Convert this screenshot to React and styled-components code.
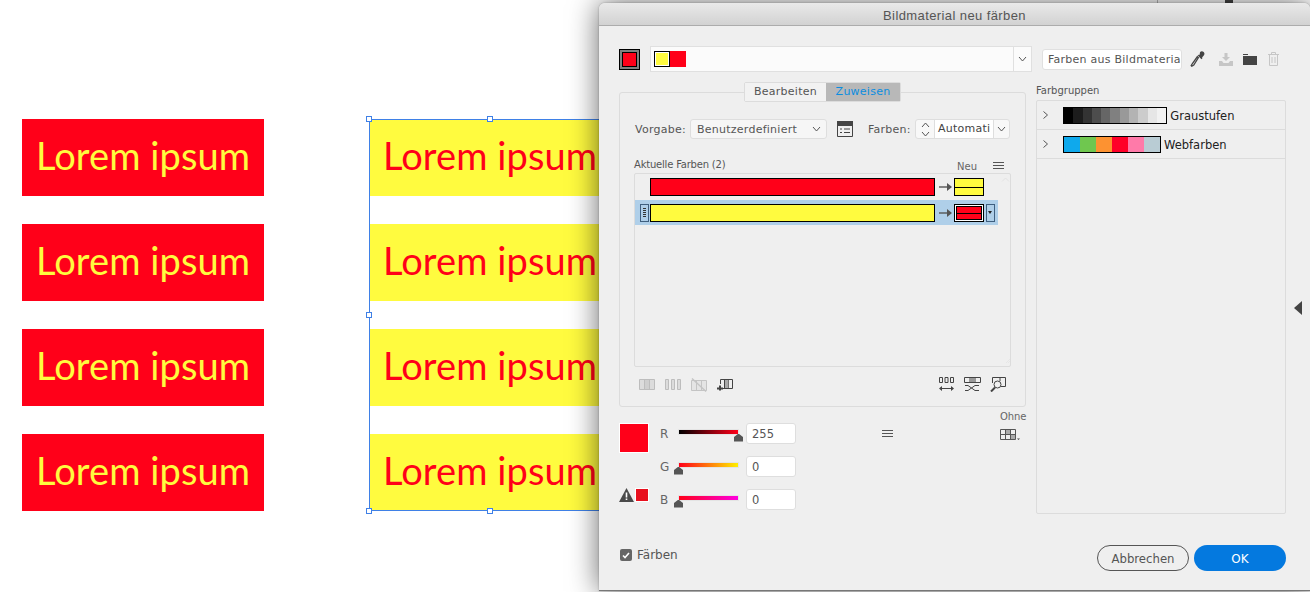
import React from 'react';
import styled, { createGlobalStyle } from 'styled-components';

const RED = '#ff0019';
const YELLOW = '#fffb3f';

const grays = ['#000', '#1c1c1c', '#333', '#4d4d4d', '#666', '#808080', '#999', '#b3b3b3', '#ccc', '#e6e6e6', '#f2f2f2'];
const webColors = ['#0fa9ec', '#6fc74f', '#fd9231', '#ff0028', '#ff7aa9', '#b9ccd4'];

function Chevron({ up }) {
    return (
        <svg width="9" height="6" viewBox="0 0 9 6" fill="none" stroke="#555" strokeWidth="1">
            <path d={up ? 'M1 5l3.5-4L8 5' : 'M1 1l3.5 4L8 1'} />
        </svg>
    );
}

function MenuLines() {
    return (
        <svg width="11" height="8" viewBox="0 0 11 8" stroke="#555" strokeWidth="1">
            <path d="M0 .5h11M0 3.5h11M0 6.5h11" />
        </svg>
    );
}

function ArrowRight() {
    return (
        <svg width="13" height="10" viewBox="0 0 13 10" fill="#555">
            <path d="M0 4.3h8v1.4H0z" />
            <path d="M8 1l5 4-5 4z" />
        </svg>
    );
}

function Blocks({ inverted }) {
    return [0, 1, 2, 3].map((i) => (
        <Block key={i} $inverted={inverted}>Lorem ipsum</Block>
    ));
}

function Slider({ label, gradient, value, at }) {
    return (
        <SliderRow>
            <SliderLabel>{label}</SliderLabel>
            <Track $gradient={gradient}>
                <Thumb style={{ left: at - 5 }} />
            </Track>
            <ValueBox>{value}</ValueBox>
        </SliderRow>
    );
}

function App() {
    return (
        <Page>
            <GlobalStyle />
            <BackWindow />
            <Canvas>
                <Column><Blocks /></Column>
                <SelectedColumn>
                    <Blocks inverted />
                    <Handle $x="0" $y="0" />
                    <Handle $x="50%" $y="0" />
                    <Handle $x="0" $y="50%" />
                    <Handle $x="0" $y="100%" />
                    <Handle $x="50%" $y="100%" />
                </SelectedColumn>
            </Canvas>

            <Dialog>
                <TitleBar>Bildmaterial neu färben</TitleBar>
                <Body>
                    <TopRow>
                        <ActiveSwatch><span /></ActiveSwatch>
                        <GroupSelect>
                            <GroupField>
                                <MiniYellow />
                                <MiniRed />
                            </GroupField>
                            <GroupArrow><Chevron /></GroupArrow>
                        </GroupSelect>
                        <NameField>Farben aus Bildmateria</NameField>
                        <TopIcons>
                            <svg width="16" height="17" viewBox="0 0 16 17" fill="#444">
                                <path d="M10 1.2c1-1.2 2.600-1.200 3.700-.1 1.100 1.100 1 2.700-.1 3.700L12 6.400l.6.6-1.200 1.200-3.600-3.600L9 3.400l.6.6z" />
                                <path d="M7.400 5.600l1 1L3.800 14l-2 1.200-.6-.6L2.400 12.500z" fill="none" stroke="#444" strokeWidth="1.300" />
                            </svg>
                            <svg width="14" height="13" viewBox="0 0 14 13" fill="#c6c6c6">
                                <path d="M5.500 0h3v4H11L7 8 3 4h2.500z" />
                                <path d="M0 8h3l1.500 2h5L11 8h3v5H0z" />
                            </svg>
                            <svg width="14" height="11" viewBox="0 0 14 11" fill="#444">
                                <path d="M0 0h5v1H0z" />
                                <path d="M0 2h14v9H0z" />
                            </svg>
                            <svg width="11" height="14" viewBox="0 0 11 14" fill="none" stroke="#c6c6c6">
                                <path d="M0 2.500h11M3.500 2.500V.5h4v2M1.500 2.500v11h8v-11M4 5v6M7 5v6" />
                            </svg>
                        </TopIcons>
                    </TopRow>

                    <Columns>
                        <LeftColumn>
                            <Panel>
                                <Tabs>
                                    <Tab>Bearbeiten</Tab>
                                    <Tab $active>Zuweisen</Tab>
                                </Tabs>
                                <ControlRow>
                                    <PresetLabel>Vorgabe:</PresetLabel>
                                    <PresetSelect>
                                        Benutzerdefiniert
                                        <Chevron />
                                    </PresetSelect>
                                    <PresetIcon>
                                        <svg width="16" height="16" viewBox="0 0 16 16" fill="none" stroke="#444">
                                            <path d="M0 0h16v5H0z" fill="#444" stroke="none" />
                                            <path d="M.5 4v11.500h15V4" />
                                            <path d="M3 8h2M7 8h6M3 11.500h2M7 11.500h6" />
                                        </svg>
                                    </PresetIcon>
                                    <ColorsLabel>Farben:</ColorsLabel>
                                    <Combo>
                                        <Stepper><Chevron up /><Chevron /></Stepper>
                                        <ComboText>Automati</ComboText>
                                        <ComboArrow><Chevron /></ComboArrow>
                                    </Combo>
                                </ControlRow>
                                <ListHead>
                                    <ListTitle>Aktuelle Farben (2)</ListTitle>
                                    <NewLabel>Neu</NewLabel>
                                    <MenuLines />
                                </ListHead>
                                <ColorList>
                                    <Rows>
                                        <ColorRow>
                                            <Grip $hidden />
                                            <ColorBar $color={RED} />
                                            <ArrowSlot><ArrowRight /></ArrowSlot>
                                            <NewSwatch $color={YELLOW} />
                                        </ColorRow>
                                        <ColorRow $selected>
                                            <Grip />
                                            <ColorBar $color={YELLOW} />
                                            <ArrowSlot><ArrowRight /></ArrowSlot>
                                            <NewSwatch $color={RED} $selected />
                                            <RowMenu />
                                        </ColorRow>
                                    </Rows>
                                    <ScrollHints>
                                        <svg width="9" height="5" viewBox="0 0 9 5" fill="none" stroke="#e2e2e2"><path d="M1 4.500l3.500-3.500L8 4.500" /></svg>
                                        <svg width="5" height="5" viewBox="0 0 5 5" stroke="#e6e6e6"><path d="M5 1L1 5M5 3L3 5" /></svg>
                                    </ScrollHints>
                                </ColorList>
                                <ToolRow>
                                    <ToolGroup>
                                        <svg width="16" height="11" viewBox="0 0 16 11" fill="#dcdcdc" stroke="#bdbdbd">
                                            <path d="M.5.500h15v10H.5zM5.500.500v10M10.500.500v10" />
                                            <path d="M6 1h4v9H6z" fill="#cfcfcf" stroke="none" />
                                        </svg>
                                        <svg width="16" height="11" viewBox="0 0 16 11" fill="#dcdcdc" stroke="#bdbdbd">
                                            <path d="M.5.500h3v10h-3zM6.500.500h3v10h-3zM12.500.500h3v10h-3z" />
                                        </svg>
                                        <svg width="16" height="14" viewBox="0 0 16 14" fill="#e4e4e4" stroke="#c4c4c4">
                                            <path d="M.5 2.500h15v10H.5zM5.500 2.500v10M10.500 2.500v10" />
                                            <path d="M1 .5l14 13" strokeWidth="1.400" />
                                        </svg>
                                        <svg width="16" height="12" viewBox="0 0 16 12" fill="none" stroke="#444">
                                            <path d="M3.500 5V.5h12v9H6M7.500.5v9M11.500.5v9" />
                                            <path d="M8 1h3.500v8H8z" fill="#aaa" stroke="none" />
                                            <path d="M0 9.500h6M3 6.500v5" strokeWidth="2" />
                                        </svg>
                                    </ToolGroup>
                                    <ToolGroup $tight>
                                        <svg width="17" height="15" viewBox="0 0 17 15" fill="none" stroke="#444">
                                            <path d="M1.500.5h3v5h-3zM7 .5h3v5H7zM12.500.5h3v5h-3z" />
                                            <path d="M2 11.500h13" />
                                            <path d="M4 9v5L1 11.500zM13 9v5l3-2.500z" fill="#444" stroke="none" />
                                        </svg>
                                        <svg width="17" height="15" viewBox="0 0 17 15" fill="none" stroke="#444">
                                            <path d="M.5.500h16v5H.5zM6 .5v5M11 .5v5" />
                                            <path d="M6.500 1h4v4h-4z" fill="#999" stroke="none" />
                                            <path d="M1 8.500h3l7 5h4M1 13.500h3l7-5h4" />
                                        </svg>
                                        <svg width="16" height="15" viewBox="0 0 16 15" fill="none" stroke="#444">
                                            <path d="M2.500 6V.5h13v9H11" />
                                            <circle cx="7.500" cy="7.500" r="3.500" fill="#efefef" />
                                            <path d="M5 10.500L1 14.500" strokeWidth="2" />
                                            <path d="M9 1h2v3H9z" fill="#999" stroke="none" />
                                        </svg>
                                    </ToolGroup>
                                </ToolRow>
                            </Panel>

                            <ColorSection>
                                <SwatchColumn>
                                    <BigSwatch />
                                    <WarningRow>
                                        <svg width="15" height="14" viewBox="0 0 15 14">
                                            <path d="M7.500 0L15 14H0z" fill="#4a4a4a" />
                                            <path d="M6.700 4.500h1.600v5H6.700zM6.700 10.500h1.600v1.600H6.700z" fill="#fff" />
                                        </svg>
                                        <SmallSwatch />
                                    </WarningRow>
                                </SwatchColumn>
                                <Sliders>
                                    <Slider label="R" gradient={`linear-gradient(to right, #000, ${RED})`} value="255" at={60} />
                                    <Slider label="G" gradient={`linear-gradient(to right, ${RED}, #fff000)`} value="0" at={0} />
                                    <Slider label="B" gradient={`linear-gradient(to right, ${RED}, #ff00e0)`} value="0" at={0} />
                                </Sliders>
                                <SliderMenu><MenuLines /></SliderMenu>
                                <NoneColumn>
                                    <NoneLabel>Ohne</NoneLabel>
                                    <svg width="20" height="11" viewBox="0 0 20 11">
                                        <path d="M.5.500h15v10H.5zM5.500.500v10M10.500.500v10M.5 5.500h15" fill="#eee" stroke="#555" />
                                        <path d="M6 1h4v4H6zM11 6h4v4h-4z" fill="#aaa" />
                                        <path d="M17 9.500h3l-1.500 1.500z" fill="#444" />
                                    </svg>
                                </NoneColumn>
                            </ColorSection>
                        </LeftColumn>

                        <RightColumn>
                            <GroupsLabel>Farbgruppen</GroupsLabel>
                            <GroupsPanel>
                                <GroupRow>
                                    <GroupChevron>
                                        <svg width="5" height="8" viewBox="0 0 5 8" fill="none" stroke="#555"><path d="M.5.500L4.500 4 .5 7.500" /></svg>
                                    </GroupChevron>
                                    <Ramp $cell={9.3}>{grays.map((c) => <i key={c} style={{ background: c }} />)}</Ramp>
                                    <GroupName>Graustufen</GroupName>
                                </GroupRow>
                                <GroupRow>
                                    <GroupChevron>
                                        <svg width="5" height="8" viewBox="0 0 5 8" fill="none" stroke="#555"><path d="M.5.500L4.500 4 .5 7.500" /></svg>
                                    </GroupChevron>
                                    <Ramp $cell={16}>{webColors.map((c) => <i key={c} style={{ background: c }} />)}</Ramp>
                                    <GroupName>Webfarben</GroupName>
                                </GroupRow>
                            </GroupsPanel>
                        </RightColumn>
                    </Columns>

                    <Footer>
                        <CheckLabel>
                            <CheckBox>
                                <svg width="8" height="7" viewBox="0 0 8 7" fill="none" stroke="#fff" strokeWidth="1.600"><path d="M1 3.500l2 2 4-4.500" /></svg>
                            </CheckBox>
                            Färben
                        </CheckLabel>
                        <Buttons>
                            <CancelButton>Abbrechen</CancelButton>
                            <OkButton>OK</OkButton>
                        </Buttons>
                    </Footer>
                </Body>
                <ExpandArrow />
            </Dialog>
        </Page>
    );
}

export default App;

const GlobalStyle = createGlobalStyle`
    html, body {
        margin: 0;
        padding: 0;
        background: #fff;
    }
    svg {
        display: block;
        flex: none;
    }
`

const Page = styled.div`
    position: relative;
    width: 1310px;
    height: 592px;
    overflow: hidden;
    background: #fff;
    font-family: "DejaVu Sans", sans-serif;
    font-size: 11px;
    letter-spacing: 0.25px;
    color: #555;
`

const BackWindow = styled.div`
    position: absolute;
    top: 0;
    left: 1157px;
    width: 153px;
    height: 3px;
    border-left: 1px solid #bbb;
    background: linear-gradient(to right, transparent 67px, #444 67px, #444 75px, transparent 75px);
`

const Canvas = styled.div`
    display: flex;
    gap: 105px;
    padding: 119px 0 0 22px;
`

const Column = styled.div`
    display: flex;
    flex-direction: column;
    gap: 28px;
    width: 242px;
`

const SelectedColumn = styled(Column)`
    position: relative;

    &::after {
        content: '';
        position: absolute;
        inset: 0;
        border: 1px solid #3f80e6;
    }
`

const Handle = styled.div`
    position: absolute;
    z-index: 1;
    left: ${(p) => p.$x};
    top: ${(p) => p.$y};
    width: 6px;
    height: 6px;
    margin: -3px 0 0 -3px;
    box-sizing: border-box;
    background: #fff;
    border: 1px solid #3f80e6;
`

const Block = styled.div`
    height: 77px;
    padding-left: 14px;
    box-sizing: border-box;
    background: ${(p) => (p.$inverted ? YELLOW : RED)};
    color: ${(p) => (p.$inverted ? RED : YELLOW)};
    font-family: "Lato", sans-serif;
    font-size: 38px;
    letter-spacing: 0.1px;
    line-height: 72px;
    white-space: nowrap;
`

const Dialog = styled.div`
    position: absolute;
    left: 599px;
    top: 3px;
    width: 711px;
    height: 588px;
    box-sizing: border-box;
    background: #efefef;
    border-radius: 6px 6px 0 0;
    border-bottom: 1px solid #777;
    box-shadow: 0 0 30px rgba(0, 0, 0, 0.6), 0 0 2px rgba(0, 0, 0, 0.3);
`

const TitleBar = styled.div`
    height: 23px;
    box-sizing: border-box;
    border-radius: 6px 6px 0 0;
    border-bottom: 1px solid #acacac;
    background: linear-gradient(#e9e9e9, #d2d2d2);
    font-family: "Liberation Sans", sans-serif;
    font-size: 13px;
    letter-spacing: 0.4px;
    line-height: 25px;
    text-align: center;
    color: #555;
`

const Body = styled.div`
    padding: 20px 24px 0 20px;
`

const TopRow = styled.div`
    display: flex;
    align-items: center;
    height: 26px;
`

const ActiveSwatch = styled.div`
    width: 21px;
    height: 21px;
    box-sizing: border-box;
    border: 1px solid #000;
    background: #808080;
    padding: 2px;

    span {
        display: block;
        height: 100%;
        background: ${RED};
        border: 1px solid #000;
        box-sizing: border-box;
    }
`

const GroupSelect = styled.div`
    display: flex;
    width: 382px;
    height: 26px;
    margin-left: 10px;
    box-sizing: border-box;
    border: 1px solid #e0e0e0;
    background: #fbfbfb;
`

const GroupField = styled.div`
    flex: 1;
    display: flex;
    align-items: center;
    padding-left: 3px;
`

const MiniYellow = styled.div`
    width: 16px;
    height: 16px;
    box-sizing: border-box;
    background: ${YELLOW};
    border: 1px solid #000;
    box-shadow: inset 0 0 0 1px #fff;
`

const MiniRed = styled.div`
    width: 16px;
    height: 16px;
    background: ${RED};
`

const GroupArrow = styled.div`
    width: 17px;
    display: flex;
    align-items: center;
    justify-content: center;
    border-left: 1px solid #e0e0e0;
`

const NameField = styled.div`
    width: 140px;
    height: 21px;
    margin-left: 10px;
    padding-left: 5px;
    box-sizing: border-box;
    overflow: hidden;
    white-space: nowrap;
    border: 1px solid #e0e0e0;
    border-radius: 3px;
    background: #fff;
    line-height: 20px;
`

const TopIcons = styled.div`
    display: flex;
    align-items: center;
    gap: 10px;
    margin-left: 8px;

    svg:first-child { margin-right: 3px; }
    svg:last-child { margin-left: 1px; }
`

const Columns = styled.div`
    display: flex;
    gap: 10px;
    height: 432px;
    margin-top: 10px;
`

const LeftColumn = styled.div`
    width: 407px;
    padding-top: 10px;
    box-sizing: border-box;
`

const Panel = styled.div`
    height: 315px;
    box-sizing: border-box;
    padding: 0 14px;
    border: 1px solid #dcdcdc;
    border-radius: 3px;
`

const Tabs = styled.div`
    display: flex;
    width: fit-content;
    margin: -11px auto 0;
    border: 1px solid #dcdcdc;
    background: #efefef;
    border-radius: 2px;
`

const Tab = styled.div`
    width: 81px;
    &:last-child { width: 74px; }
    height: 18px;
    line-height: 18px;
    text-align: center;
    background: ${(p) => (p.$active ? '#b8b8b8' : '#f2f2f2')};
    color: ${(p) => (p.$active ? '#0a8de0' : '#555')};
`

const ControlRow = styled.div`
    display: flex;
    align-items: center;
    height: 20px;
    margin-top: 17px;
`

const PresetLabel = styled.div`
    width: 56px;
    padding-left: 1px;
    box-sizing: border-box;
`

const PresetSelect = styled.div`
    display: flex;
    align-items: center;
    justify-content: space-between;
    width: 137px;
    height: 20px;
    padding: 0 5px 0 6px;
    box-sizing: border-box;
    border: 1px solid #dedede;
    border-radius: 3px;
    background: #f6f6f6;
`

const PresetIcon = styled.div`
    margin-left: 10px;
`

const ColorsLabel = styled.div`
    margin-left: 15px;
    width: 47px;
`

const Combo = styled.div`
    display: flex;
    width: 95px;
    height: 20px;
    box-sizing: border-box;
    border: 1px solid #dedede;
    border-radius: 3px;
    background: #f8f8f8;
`

const Stepper = styled.div`
    width: 18px;
    display: flex;
    flex-direction: column;
    align-items: center;
    justify-content: center;
    gap: 3px;
    border-right: 1px solid #dedede;
`

const ComboText = styled.div`
    width: 58px;
    padding-left: 3px;
    box-sizing: border-box;
    overflow: hidden;
    white-space: nowrap;
    line-height: 18px;
    background: #fff;
    color: #444;
`

const ComboArrow = styled.div`
    flex: 1;
    display: flex;
    align-items: center;
    justify-content: center;
    border-left: 1px solid #dedede;
`

const ListHead = styled.div`
    display: flex;
    align-items: center;
    height: 15px;
    margin-top: 19px;
    padding-right: 7px;
    font-size: 10px;
    letter-spacing: 0;
`

const ListTitle = styled.div`
    flex: 1;
    margin-top: -2px;
    letter-spacing: -0.2px;
`

const NewLabel = styled.div`
    margin: 1px 16px 0 0;
    color: #666;
`

const ColorList = styled.div`
    display: flex;
    height: 194px;
    box-sizing: border-box;
    border: 1px solid #dcdcdc;
    border-radius: 2px;
`

const Rows = styled.div`
    width: 363px;
`

const ColorRow = styled.div`
    display: flex;
    align-items: flex-start;
    height: ${(p) => (p.$selected ? 25 : 26)}px;
    padding: 4px 0 0 5px;
    box-sizing: border-box;
    background: ${(p) => (p.$selected ? '#afcfe9' : 'transparent')};
`

const Grip = styled.div`
    width: 9px;
    height: 18px;
    margin-right: 1px;
    box-sizing: border-box;
    border: 1px solid ${(p) => (p.$hidden ? 'transparent' : '#3f5f7f')};
    background: ${(p) =>
        p.$hidden ? 'none' : 'repeating-linear-gradient(#333 0 1px, transparent 1px 2px) 2px 3px / 3px 10px no-repeat'};
`

const ColorBar = styled.div`
    width: 285px;
    height: 18px;
    box-sizing: border-box;
    border: 1px solid #000;
    background: ${(p) => p.$color};
`

const ArrowSlot = styled.div`
    width: 19px;
    height: 18px;
    display: flex;
    align-items: center;
    padding-left: 4px;
    box-sizing: border-box;
`

const NewSwatch = styled.div`
    position: relative;
    width: 30px;
    height: 18px;
    box-sizing: border-box;
    border: 1px solid #000;
    background: ${(p) => p.$color};
    box-shadow: ${(p) => (p.$selected ? 'inset 0 0 0 1px #fff, inset 0 0 0 2px #000' : 'none')};

    &::after {
        content: '';
        position: absolute;
        left: ${(p) => (p.$selected ? 2 : 0)}px;
        right: ${(p) => (p.$selected ? 2 : 0)}px;
        top: 8px;
        height: 1px;
        background: #000;
    }
`

const RowMenu = styled.div`
    position: relative;
    width: 9px;
    height: 18px;
    margin-left: 2px;
    box-sizing: border-box;
    border: 1px solid #3f5f7f;

    &::after {
        content: '';
        position: absolute;
        left: 1px;
        top: 6px;
        border: 2.5px solid transparent;
        border-top: 3px solid #222;
    }
`

const ScrollHints = styled.div`
    flex: 1;
    display: flex;
    flex-direction: column;
    align-items: center;
    justify-content: space-between;
    padding: 3px 0 3px 2px;

    svg:last-child {
        align-self: flex-end;
    }
`

const ToolRow = styled.div`
    display: flex;
    justify-content: space-between;
    align-items: center;
    height: 15px;
    margin-top: 10px;
    padding: 0 5px;
`

const ToolGroup = styled.div`
    display: flex;
    align-items: center;
    gap: ${(p) => (p.$tight ? 9 : 10)}px;
`

const ColorSection = styled.div`
    display: flex;
    padding-top: 16px;
`

const SwatchColumn = styled.div`
    display: flex;
    flex-direction: column;
    justify-content: space-between;
    width: 30px;
    height: 79px;
`

const BigSwatch = styled.div`
    width: 30px;
    height: 30px;
    box-sizing: border-box;
    border: 1px solid #fff;
    background: ${RED};
`

const WarningRow = styled.div`
    display: flex;
    align-items: flex-end;
    gap: 1px;
`

const SmallSwatch = styled.div`
    width: 14px;
    height: 14px;
    flex: none;
    box-sizing: border-box;
    border: 1px solid #fff;
    background: #e8101e;
`

const Sliders = styled.div`
    display: flex;
    flex-direction: column;
    gap: 12px;
    margin-left: 11px;
`

const SliderRow = styled.div`
    display: flex;
    align-items: center;
    height: 21px;
`

const SliderLabel = styled.div`
    width: 19px;
    font-size: 12px;
    letter-spacing: 0;
    color: #666;
`

const Track = styled.div`
    position: relative;
    width: 59px;
    height: 4px;
    margin: -4px 8px 0 0;
    background: ${(p) => p.$gradient};
    box-shadow: 0 0 0 1px #e4e4e4;
`

const Thumb = styled.div`
    position: absolute;
    top: 4px;
    width: 9px;
    height: 8px;
    background: #555;
    clip-path: polygon(50% 0, 100% 45%, 100% 100%, 0 100%, 0 45%);
`

const ValueBox = styled.div`
    width: 50px;
    height: 21px;
    box-sizing: border-box;
    padding-left: 5px;
    border: 1px solid #dedede;
    border-radius: 3px;
    background: #fff;
    font-size: 11.5px;
    letter-spacing: 0;
    line-height: 20px;
`

const SliderMenu = styled.div`
    margin: 7px 0 0 86px;
`

const NoneColumn = styled.div`
    display: flex;
    flex-direction: column;
    gap: 6px;
    margin: -12px 0 0 auto;
    width: 26px;
    font-size: 10px;
    letter-spacing: -0.1px;
`

const NoneLabel = styled.div`
    line-height: 12px;
    color: #666;
`

const RightColumn = styled.div`
    flex: 1;
    display: flex;
    flex-direction: column;
`

const GroupsLabel = styled.div`
    height: 18px;
    font-size: 10px;
    letter-spacing: 0;
    line-height: 18px;
`

const GroupsPanel = styled.div`
    flex: 1;
    box-sizing: border-box;
    border: 1px solid #dcdcdc;
    border-radius: 2px;
`

const GroupRow = styled.div`
    display: flex;
    align-items: center;
    height: 29px;
    padding-left: 6px;
    box-sizing: border-box;
    border-bottom: 1px solid #dcdcdc;
`

const GroupChevron = styled.div`
    width: 20px;
`

const Ramp = styled.div`
    display: flex;
    height: 17px;
    box-sizing: border-box;
    border: 1px solid #000;

    i {
        display: block;
        width: ${(p) => p.$cell}px;
    }
`

const GroupName = styled.div`
    margin: 1px 0 0 3px;
    font-size: 11.5px;
    letter-spacing: 0;
    color: #222;
`

const Footer = styled.div`
    display: flex;
    align-items: center;
    justify-content: space-between;
    height: 26px;
    margin-top: 31px;
`

const CheckLabel = styled.div`
    display: flex;
    align-items: center;
    gap: 5px;
    margin-top: -6px;
    padding-left: 1px;
    font-size: 12px;
    letter-spacing: 0;
`

const CheckBox = styled.div`
    display: flex;
    align-items: center;
    justify-content: center;
    width: 12px;
    height: 12px;
    border-radius: 2px;
    background: #666;
`

const Buttons = styled.div`
    display: flex;
    gap: 5px;
`

const CancelButton = styled.div`
    width: 92px;
    height: 26px;
    box-sizing: border-box;
    border: 1px solid #555;
    border-radius: 13px;
    font-size: 11.7px;
    letter-spacing: 0;
    line-height: 26px;
    text-align: center;
`

const OkButton = styled.div`
    width: 92px;
    height: 26px;
    border-radius: 13px;
    background: #0479df;
    color: #fff;
    font-size: 12px;
    letter-spacing: 0;
    line-height: 28px;
    text-align: center;
`

const ExpandArrow = styled.div`
    position: absolute;
    left: 695px;
    top: 298px;
    border: 7px solid transparent;
    border-left: 0;
    border-right: 8px solid #444;
`
